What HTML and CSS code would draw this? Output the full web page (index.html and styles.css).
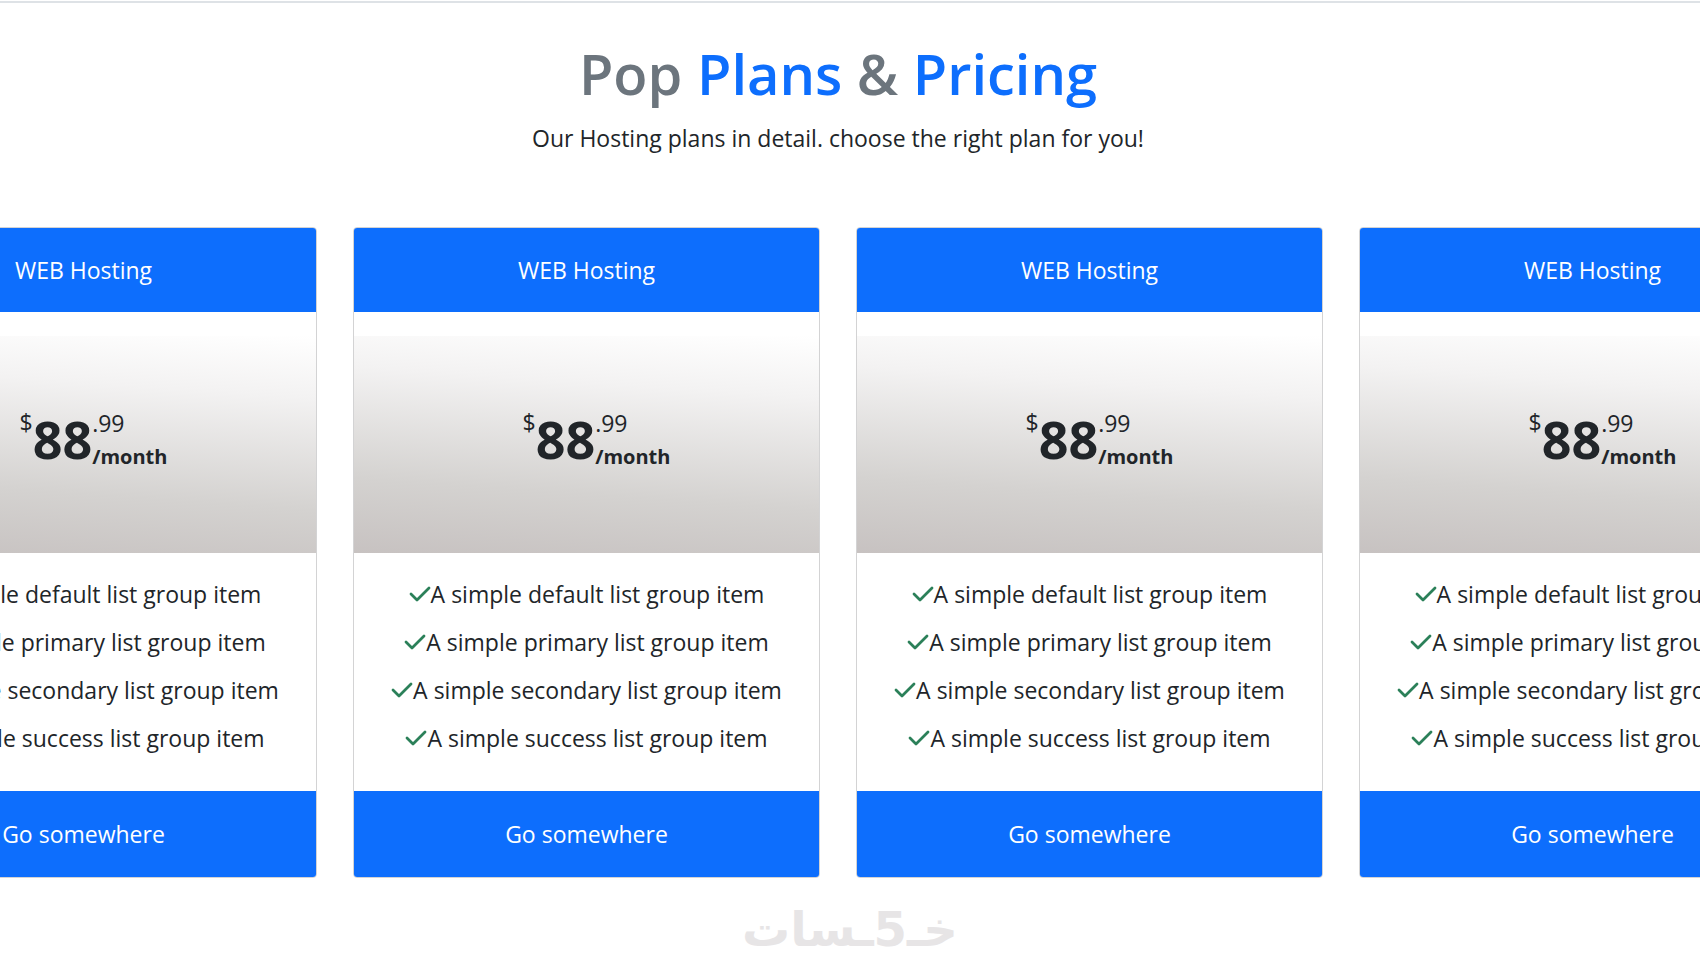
FILE: index.html
```html
<!DOCTYPE html>
<html lang="en">
<head>
    <meta charset="UTF-8">
    <meta name="viewport" content="width=device-width, initial-scale=1.0">
    <title>Plans & Pricing</title>
    <link rel="stylesheet" href="styles.css">
</head>
<body>
    <!-- check icon used by the lists -->
    <svg class="sprite" width="0" height="0" aria-hidden="true">
        <symbol id="check" viewBox="0 0 22 24">
            <path d="M2 12 L8 18 L20 6" fill="none" stroke="currentColor" stroke-width="2.8" stroke-linecap="round" stroke-linejoin="round"/>
        </symbol>
    </svg>

    <section class="pricing">
        <div class="heading">
            <h1>Pop <span>Plans</span> &amp; <span>Pricing</span></h1>
            <p>Our Hosting plans in detail. choose the right plan for you!</p>
        </div>

        <div class="plans">
            <div class="card">
                <div class="card-header">WEB Hosting</div>
                <div class="price"><sup>$</sup><strong>88</strong><span class="cents"><sup>.99</sup><sub>/month</sub></span></div>
                <ul>
                    <li><svg class="check"><use href="#check"/></svg>A simple default list group item</li>
                    <li><svg class="check"><use href="#check"/></svg>A simple primary list group item</li>
                    <li><svg class="check"><use href="#check"/></svg>A simple secondary list group item</li>
                    <li><svg class="check"><use href="#check"/></svg>A simple success list group item</li>
                </ul>
                <a href="#" class="card-link">Go somewhere</a>
            </div>

            <div class="card">
                <div class="card-header">WEB Hosting</div>
                <div class="price"><sup>$</sup><strong>88</strong><span class="cents"><sup>.99</sup><sub>/month</sub></span></div>
                <ul>
                    <li><svg class="check"><use href="#check"/></svg>A simple default list group item</li>
                    <li><svg class="check"><use href="#check"/></svg>A simple primary list group item</li>
                    <li><svg class="check"><use href="#check"/></svg>A simple secondary list group item</li>
                    <li><svg class="check"><use href="#check"/></svg>A simple success list group item</li>
                </ul>
                <a href="#" class="card-link">Go somewhere</a>
            </div>

            <div class="card">
                <div class="card-header">WEB Hosting</div>
                <div class="price"><sup>$</sup><strong>88</strong><span class="cents"><sup>.99</sup><sub>/month</sub></span></div>
                <ul>
                    <li><svg class="check"><use href="#check"/></svg>A simple default list group item</li>
                    <li><svg class="check"><use href="#check"/></svg>A simple primary list group item</li>
                    <li><svg class="check"><use href="#check"/></svg>A simple secondary list group item</li>
                    <li><svg class="check"><use href="#check"/></svg>A simple success list group item</li>
                </ul>
                <a href="#" class="card-link">Go somewhere</a>
            </div>

            <div class="card">
                <div class="card-header">WEB Hosting</div>
                <div class="price"><sup>$</sup><strong>88</strong><span class="cents"><sup>.99</sup><sub>/month</sub></span></div>
                <ul>
                    <li><svg class="check"><use href="#check"/></svg>A simple default list group item</li>
                    <li><svg class="check"><use href="#check"/></svg>A simple primary list group item</li>
                    <li><svg class="check"><use href="#check"/></svg>A simple secondary list group item</li>
                    <li><svg class="check"><use href="#check"/></svg>A simple success list group item</li>
                </ul>
                <a href="#" class="card-link">Go somewhere</a>
            </div>
        </div>
    </section>

    <footer class="brand" lang="ar" dir="rtl">خـ5ـسات</footer>
</body>
</html>
```

FILE: styles.css
```css
* {
    margin: 0;
    padding: 0;
    box-sizing: border-box;
}

body {
    font-family: "Open Sans", "Noto Sans", sans-serif;
    font-size: 23px;
    line-height: 36px;
    color: #212529;
    background-color: #fff;
    overflow-x: hidden;
}

.sprite {
    position: absolute;
}

.pricing {
    margin-top: 1px;
    padding: 34px 24px 0 0;
    border-top: 2px solid #dee2e6;
}

.heading {
    text-align: center;
    margin-bottom: 71px;
}

h1 {
    font-size: 56px;
    font-weight: 600;
    line-height: 72px;
    margin-bottom: 11px;
    color: #6c757d;
}

h1 span {
    color: #0d6efd;
}

/* the row is wider than the page, so it stays centered and is cut on both sides */
.plans {
    display: flex;
    justify-content: center;
    gap: 36px;
}

.card {
    flex: none;
    width: 467px;
    text-align: center;
    border: 1px solid #d3d3d4;
    border-radius: 4px;
    overflow: hidden;
}

.card-header {
    padding: 24px;
    margin-bottom: 24px;
    color: #fff;
    background-color: #0d6efd;
}

.price {
    display: flex;
    justify-content: center;
    align-items: center;
    height: 217px;
    padding: 0 0 12px 20px;
    background-image: linear-gradient(4deg, #c7c2c1 0%, #d4d2d0 30%, #f3f2f2 75%, #fff 100%);
}

.price sup,
.price sub {
    display: block;
    font-size: 23px;
    line-height: 36px;
}

.price > sup {
    margin-bottom: 34px;
}

.price strong {
    font-size: 52px;
    line-height: 64px;
}

.price .cents {
    text-align: left;
}

.price sub {
    font-size: 20px;
    font-weight: bold;
    line-height: 32px;
}

ul {
    list-style: none;
    padding: 17px 0 29px;
}

li {
    display: flex;
    justify-content: center;
    align-items: center;
    height: 48px;
}

.check {
    width: 22px;
    height: 24px;
    color: #2b8059;
}

.card-link {
    display: block;
    padding: 25px;
    color: #fff;
    background-color: #0d6efd;
    text-decoration: none;
}

.brand {
    padding-top: 23px;
    font-family: "DejaVu Sans", sans-serif;
    font-size: 48px;
    font-weight: bold;
    line-height: 56px;
    text-align: center;
    color: #e7e5e6;
}
```
